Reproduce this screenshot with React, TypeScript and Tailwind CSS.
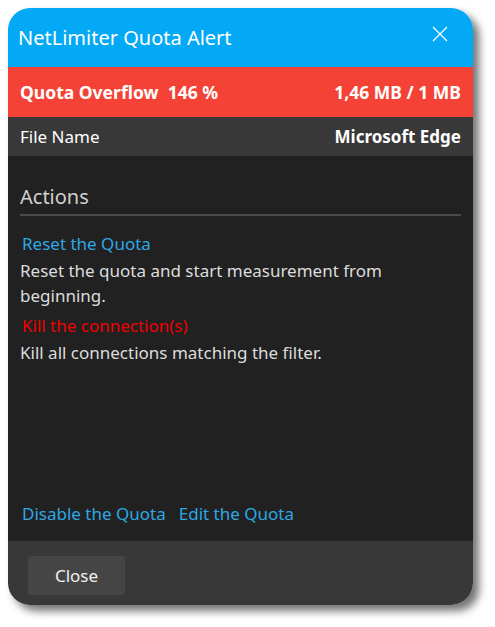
import React from 'react';

const font = { fontFamily: '"Noto Sans", "Open Sans", sans-serif' };

const CloseIcon = () => (
  <svg width="16" height="16" viewBox="0 0 16 16" className="block">
    <path d="M1 1 L15 15 M15 1 L1 15" stroke="white" strokeWidth="1.2" fill="none" />
  </svg>
);

const QuotaAlert = () => {
  return (
    <div className="w-[465px] h-[597px] rounded-[22px] overflow-hidden flex flex-col shadow-[6px_6px_8px_rgba(0,0,0,0.55)]">
      {/* title bar */}
      <div className="h-[59px] shrink-0 bg-[#03a9f4] flex items-center justify-between pl-[10px] pr-[25px]">
        <span className="text-white text-[20px] leading-none pt-[1px]">NetLimiter Quota Alert</span>
        <div className="-mt-[8px]">
          <CloseIcon />
        </div>
      </div>

      {/* overflow bar */}
      <div className="h-[50px] shrink-0 bg-[#f44336] flex items-center justify-between px-3 text-white font-bold text-[17.5px]">
        <span className="whitespace-pre">Quota Overflow  146 %</span>
        <span>1,46 MB / 1 MB</span>
      </div>

      {/* file row */}
      <div className="h-[39px] shrink-0 bg-[#383838] flex items-center justify-between px-3 text-white text-[17px]">
        <span>File Name</span>
        <span className="font-bold">Microsoft Edge</span>
      </div>

      {/* body */}
      <div className="flex-1 bg-[#212121] flex flex-col px-3 pt-[28px]">
        <div className="text-[#d0d0d0] text-[20px] leading-[26px]">Actions</div>
        <div className="h-[2px] bg-[#4a4a4a] mt-[4px]" />

        <div className="mt-[17px] pl-[2px] text-[#2ea8e5] text-[17px] leading-[22px]">Reset the Quota</div>
        <div className="mt-[3px] text-[#dcdcdc] text-[17px] leading-[25px] pr-16">
          Reset the quota and start measurement from beginning.
        </div>

        <div className="mt-[7px] pl-[2px] text-[#f00000] text-[17px] leading-[22px]">Kill the connection(s)</div>
        <div className="mt-[3px] text-[#dcdcdc] text-[17px] leading-[25px]">
          Kill all connections matching the filter.
        </div>

        <div className="mt-auto mb-[16px] pl-[2px] flex gap-[13px] text-[#2ea8e5] text-[17px] leading-[22px]">
          <span>Disable the Quota</span>
          <span>Edit the Quota</span>
        </div>
      </div>

      {/* footer */}
      <div className="h-[64px] shrink-0 bg-[#383838] flex items-start px-5 pt-[15px]">
        <button className="w-[97px] h-[39px] rounded-[3px] bg-[#454545] text-[#f0f0f0] text-[17px]">Close</button>
      </div>
    </div>
  );
};

export default function App() {
  return (
    <div className="w-[495px] h-[627px] bg-white pl-[8px] pt-[8px]" style={font}>
      <QuotaAlert />
    </div>
  );
}
